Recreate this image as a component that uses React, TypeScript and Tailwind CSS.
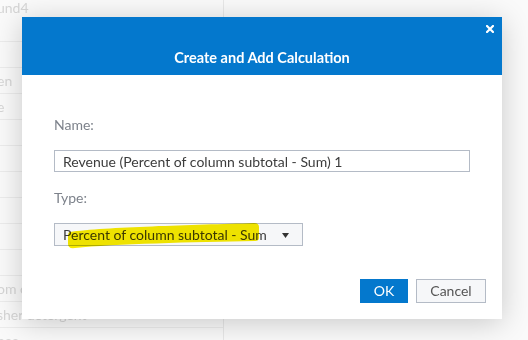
import React from "react";

const rows = [
  { h: "h-[42px]", text: "und4", cls: "-mt-[26px]" },
  { h: "h-[26px]", text: "" },
  { h: "h-[26px]", text: "en" },
  { h: "h-[26px]", text: "e" },
  { h: "h-[26px]", text: "" },
  { h: "h-[26px]", text: "" },
  { h: "h-[26px]", text: "" },
  { h: "h-[26px]", text: "" },
  { h: "h-[26px]", text: "" },
  { h: "h-[26px]", text: "" },
  { h: "h-[26px]", text: "om c" },
  { h: "h-[26px]", text: "sher detergent" },
  { h: "h-[26px]", text: "nes" },
];

function Backdrop() {
  return (
    <div className="flex h-full">
      <div className="w-[224px] border-r border-[#e8e8e8] overflow-hidden">
        {rows.map((r, i) => (
          <div
            key={i}
            className={`${r.h} flex items-center border-b border-[#ececec] text-[14px] text-[#d6d6d6] whitespace-nowrap`}
          >
            <span className={`-ml-[3px] ${r.cls ?? ""}`}>{r.text}</span>
          </div>
        ))}
      </div>
      <div className="flex-1" />
    </div>
  );
}

export default function App() {
  return (
    <div className="relative w-[528px] h-[340px] overflow-hidden bg-[#fafafa] font-['Lato',_'Open_Sans',_sans-serif]">
      <Backdrop />

      <div className="absolute left-[22px] top-[17px] w-[480px] h-[302px] bg-white flex flex-col shadow-[0_4px_28px_rgba(0,0,0,0.2)]">
        <div className="relative h-[58px] bg-[#0478cd] pt-[32px]">
          <div className="text-center text-white text-[14.5px] font-bold leading-[18px]">
            Create and Add Calculation
          </div>
          <button className="absolute right-[8px] top-[8px] w-[8px] h-[8px]" aria-label="Close">
            <svg viewBox="0 0 8 8" width="8" height="8">
              <path d="M1 1 L7 7 M7 1 L1 7" stroke="#fff" strokeWidth="2.2" strokeLinecap="square" />
            </svg>
          </button>
        </div>

        <div className="flex flex-col px-[32px] pt-[41px]">
          <label className="text-[14px] leading-[18px] text-[#7d828b]">Name:</label>
          <div className="mt-[16px] w-[416px] h-[22px] border border-[#b4bbc6] flex items-center pl-[8px] text-[14px] text-[#3c3c3c]">
            Revenue (Percent of column subtotal - Sum) 1
          </div>
          <label className="mt-[17px] text-[14px] leading-[18px] text-[#7d828b]">Type:</label>
          <div className="relative mt-[16px] w-[249px] h-[23px] border border-[#b4bbc6] bg-[#f6f7f9] flex items-center pl-[8px] text-[14px] text-[#3c3c3c]">
            <span>Percent of column subtotal - Sum</span>
            <svg className="absolute right-[13px] top-[9px]" width="7" height="5" viewBox="0 0 7 5">
              <path d="M0 0 H7 L3.5 5 Z" fill="#333" />
            </svg>
            <svg
              className="absolute left-[-1px] top-[-1px] overflow-visible mix-blend-multiply pointer-events-none"
              width="249"
              height="23"
              viewBox="0 0 249 23"
            >
              <path
                d="M16,9 C50,4 140,2 200,0 Q205,0 205,4 L205,15 Q205,18 201,18 C140,19 60,21 21,25 Q14,26 14,21 L14,13 Q14,9 16,9 Z"
                fill="#f7ea00"
              />
            </svg>
          </div>
        </div>

        <div className="mt-auto flex justify-end gap-[8px] pr-[16px] pb-[16px]">
          <button className="w-[48px] h-[24px] bg-[#0478cd] text-white text-[14px] leading-none">OK</button>
          <button className="w-[70px] h-[24px] bg-[#f6f7f9] border border-[#b4bbc6] text-[#555] text-[14px] leading-none">
            Cancel
          </button>
        </div>
      </div>
    </div>
  );
}
